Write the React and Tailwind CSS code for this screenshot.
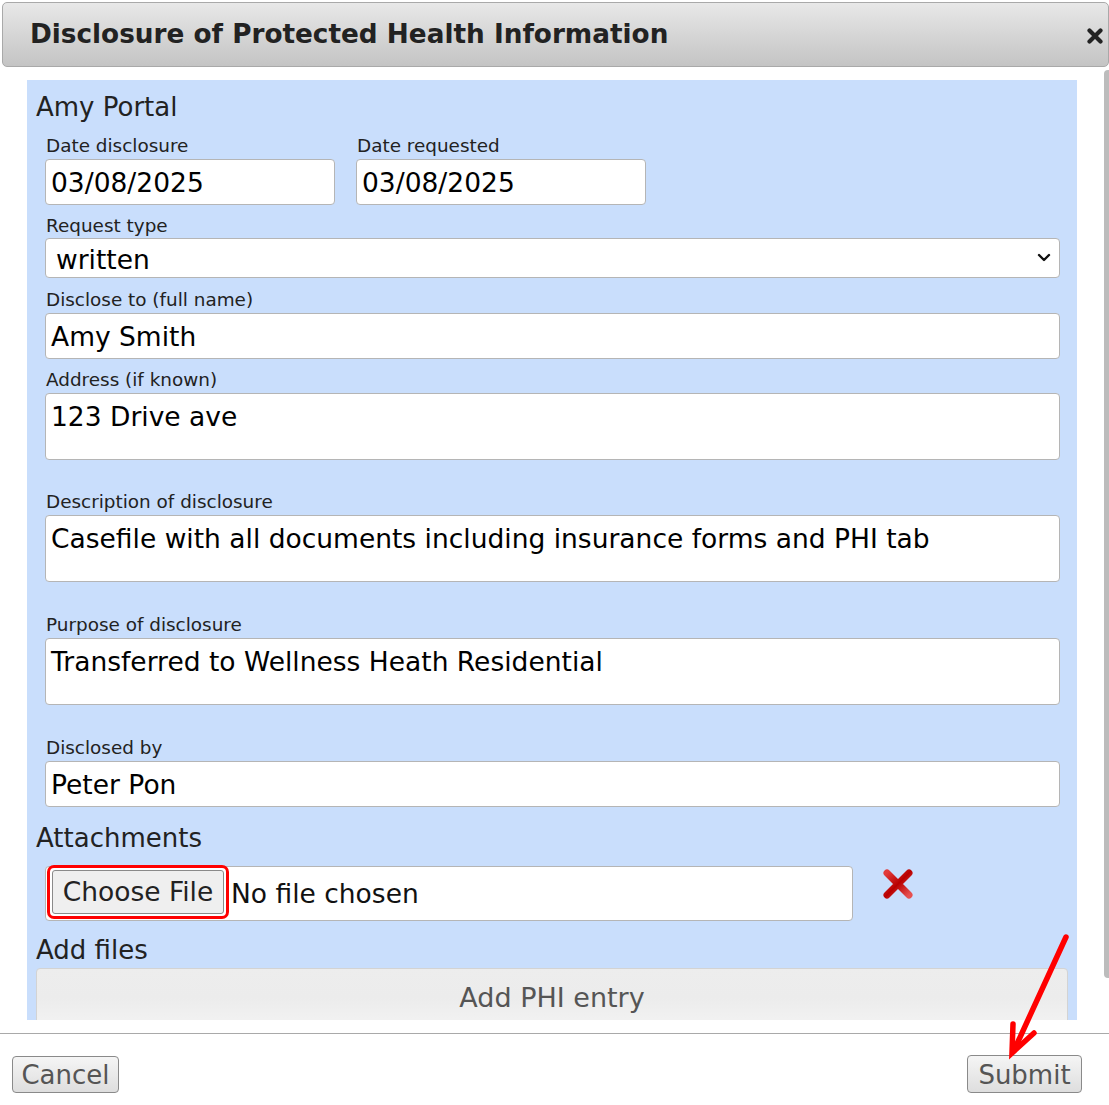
import React from "react";

const Label = ({ children }) => (
  <div className="h-[22px] pl-[1px] text-[18.4px] leading-[22px] text-[#222]">
    {children}
  </div>
);

const Field = ({ label, value, className = "" }) => (
  <div className={className}>
    <Label>{label}</Label>
    <div className="mt-[2px] h-[46px] rounded-[4px] border border-[#b5b5b5] bg-white px-[5px] text-[26.5px] leading-[46px] text-black">
      {value}
    </div>
  </div>
);

const Area = ({ label, value, className = "" }) => (
  <div className={className}>
    <Label>{label}</Label>
    <div className="mt-[2px] h-[67px] rounded-[4px] border border-[#b5b5b5] bg-white px-[5px] pt-[7px] text-[26.5px] leading-[32px] text-black">
      {value}
    </div>
  </div>
);

const RedX = () => (
  <svg width="32" height="32" viewBox="0 0 32 32">
    <defs>
      <linearGradient id="rx" x1="0" y1="0" x2="1" y2="1">
        <stop offset="0" stopColor="#e23a3a" />
        <stop offset="0.5" stopColor="#b80000" />
        <stop offset="1" stopColor="#e65050" />
      </linearGradient>
    </defs>
    <path d="M5 5 L27 27 M27 5 L5 27" stroke="url(#rx)" strokeWidth="7" strokeLinecap="round" />
  </svg>
);

const App = () => {
  return (
    <div
      className="relative h-[1105px] w-[1109px] overflow-hidden bg-white"
      style={{ fontFamily: '"DejaVu Sans", Verdana, sans-serif' }}
    >
      {/* TITLE BAR */}
      <div className="ml-[2px] mt-[2px] flex h-[65px] items-center justify-between rounded-[5px] border border-[#a9a9a9] bg-gradient-to-b from-[#e8e8e8] to-[#c4c4c4] pl-[27px] pr-[5px]">
        <div className="mt-[1px] text-[26.3px] font-bold text-[#222]">
          Disclosure of Protected Health Information
        </div>
        <svg width="16" height="16" viewBox="0 0 16 16" className="mt-[2px]">
          <path d="M2.5 2.5 L13.5 13.5 M13.5 2.5 L2.5 13.5" stroke="#222" strokeWidth="4.2" strokeLinecap="round" />
        </svg>
      </div>

      {/* BODY */}
      <div className="flex h-[966px]">
        <div className="ml-[27px] mt-[13px] h-[940px] w-[1050px] overflow-hidden bg-[#c9defc] px-[9px]">
          <div className="pt-[11px] text-[26px] leading-[32px] text-[#222]">
            Amy Portal
          </div>

          <div className="pl-[9px] pr-[8px]">
            <div className="mt-[12px] flex gap-[21px]">
              <Field label="Date disclosure" value="03/08/2025" className="w-[290px]" />
              <Field label="Date requested" value="03/08/2025" className="w-[290px]" />
            </div>

            <div className="mt-[10px]">
              <Label>Request type</Label>
              <div className="mt-[1px] flex h-[40px] items-center justify-between rounded-[4px] border border-[#b5b5b5] bg-white pl-[10px] pr-[8px] text-[26.5px] text-black">
                <span className="mt-[3px]">written</span>
                <svg width="14" height="10" viewBox="0 0 14 10">
                  <path d="M2 2 L7 7 L12 2" fill="none" stroke="#111" strokeWidth="2.4" strokeLinecap="round" strokeLinejoin="round" />
                </svg>
              </div>
            </div>

            <Field label="Disclose to (full name)" value="Amy Smith" className="mt-[11px]" />
            <Area label="Address (if known)" value="123 Drive ave" className="mt-[10px]" />
            <Area
              label="Description of disclosure"
              value="Casefile with all documents including insurance forms and PHI tab"
              className="mt-[31px]"
            />
            <Area label="Purpose of disclosure" value="Transferred to Wellness Heath Residential" className="mt-[32px]" />
            <Field label="Disclosed by" value="Peter Pon" className="mt-[32px]" />
          </div>

          <div className="mt-[15px] text-[26px] leading-[32px] text-[#222]">Attachments</div>

          {/* FILE ROW */}
          <div className="mt-[12px] flex items-start pl-[9px]">
            <div className="flex h-[55px] w-[808px] items-center rounded-[4px] border border-[#b5b5b5] bg-white pl-[1px]">
              <div className="-mt-[4px] rounded-[7px] border-[3px] border-[#f00] p-[2px]">
                <div className="flex h-[44px] w-[172px] items-center justify-center rounded-[3px] border border-[#8a8a8a] bg-[#efefef] text-[26.5px] text-[#222]">
                  Choose File
                </div>
              </div>
              <span className="ml-[2px] text-[26.5px] text-[#111]">No file chosen</span>
            </div>
            <div className="ml-[29px] mt-[2px]">
              <RedX />
            </div>
          </div>

          <div className="mt-[13px] text-[26px] leading-[32px] text-[#222]">Add files</div>

          <div className="mt-[2px] h-[60px] rounded-t-[4px] border border-[#d3d3d3] bg-gradient-to-b from-[#ededed] via-[#ececec] to-[#f3f3f3] pt-[9px] text-center text-[27px] text-[#555]">
            Add PHI entry
          </div>
        </div>
        <div className="flex-1" />
        <div className="mt-[3px] h-[908px] w-[5px] rounded-l-[4px] bg-[#bcbcbc]" />
      </div>

      {/* FOOTER */}
      <div className="border-t border-[#a9a9a9]">
        <div className="flex items-start justify-between pl-[12px] pr-[27px] pt-[22px]">
          <button className="h-[37px] w-[107px] rounded-[4px] border border-[#8a8a8a] bg-gradient-to-b from-[#f5f5f5] to-[#dedede] text-[26px] leading-[37px] text-[#555]">
            Cancel
          </button>
          <button className="-mt-[1px] h-[38px] w-[115px] rounded-[4px] border border-[#8a8a8a] bg-gradient-to-b from-[#f5f5f5] to-[#dedede] text-[26px] leading-[38px] text-[#555]">
            Submit
          </button>
        </div>
      </div>

      {/* ANNOTATION ARROW */}
      <svg className="pointer-events-none absolute left-0 top-0" width="1109" height="1105">
        <path d="M1066 937 L1016 1046" stroke="#f00" strokeWidth="5.5" strokeLinecap="round" />
        <path d="M1013 1024 L1012 1053 L1034 1033" fill="none" stroke="#f00" strokeWidth="5.5" strokeLinecap="round" strokeLinejoin="miter" />
      </svg>
    </div>
  );
};

export default App;
